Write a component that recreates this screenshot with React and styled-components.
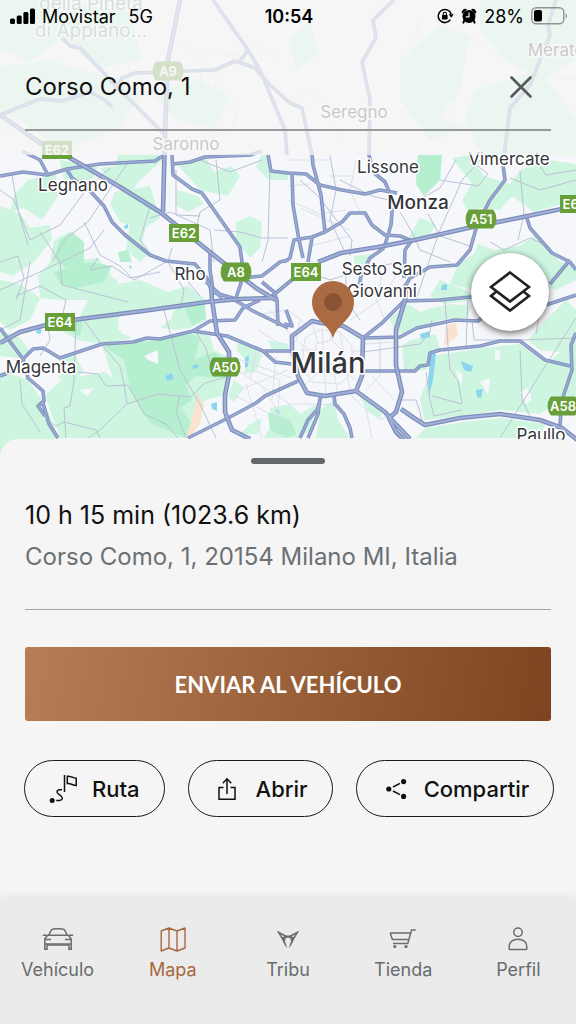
import React, { useState } from "react";
import styled, { createGlobalStyle } from "styled-components";

const GlobalStyle = createGlobalStyle`
  * {
    box-sizing: border-box;
  }
  body {
    margin: 0;
    background: #f5f5f5;
    font-family: Inter, "Liberation Sans", sans-serif;
    color: #111111;
  }
  button, input {
    font-family: inherit;
    color: inherit;
  }
`;

const Page = styled.div`
  display: flex;
  flex-direction: column;
  min-height: 100vh;
`;

const MapArea = styled.section`
  position: relative;
  flex: 1;
  min-height: 340px;
`;

const MapCanvas = styled.svg`
  position: absolute;
  top: 0;
  left: 0;
  width: 100%;
  height: calc(100% + 20px);
`;

const Header = styled.header`
  position: relative;
  height: 155px;
  background: rgba(246, 246, 246, 0.76);
`;

const StatusBar = styled.div`
  display: grid;
  grid-template-columns: 1fr auto 1fr;
  align-items: center;
  height: 32px;
  padding: 0 8px 0 10px;
  font-size: 18px;
  color: #000000;
`;

const StatusGroup = styled.div`
  display: flex;
  align-items: center;
  justify-content: ${({ $end }) => ($end ? "flex-end" : "flex-start")};
  gap: 7px;
`;

const Network = styled.span`
  margin-left: 6px;
`;

const Clock = styled.time`
  font-weight: 600;
`;

const SearchRow = styled.div`
  display: flex;
  align-items: center;
  margin: 12px 25px 0;
  height: 87px;
  border-bottom: 2px solid #97999b;
`;

const SearchInput = styled.input`
  flex: 1;
  min-width: 0;
  padding: 0;
  border: 0;
  outline: 0;
  background: transparent;
  font-size: 24px;
`;

const IconButton = styled.button`
  display: flex;
  align-items: center;
  justify-content: center;
  width: 44px;
  height: 44px;
  padding: 0;
  margin-right: 8px;
  border: 0;
  background: transparent;
  color: #55595c;
  cursor: pointer;
`;

const LayersButton = styled.button`
  position: absolute;
  top: 253px;
  right: 27px;
  display: flex;
  align-items: center;
  justify-content: center;
  width: 78px;
  height: 78px;
  padding: 0;
  border: 0;
  border-radius: 50%;
  background: #ffffff;
  color: #222222;
  box-shadow: 0 2px 7px rgba(0, 0, 0, 0.6);
  cursor: pointer;
`;

const Sheet = styled.main`
  position: relative;
  display: flex;
  flex-direction: column;
  padding: 19px 25px 81px;
  border-radius: 18px 18px 0 0;
  background: #f5f5f5;
`;

const Handle = styled.div`
  align-self: center;
  width: 74px;
  height: 6px;
  border-radius: 3px;
  background: #63686b;
`;

const Duration = styled.h1`
  margin: 36px 0 0;
  font-size: 25px;
  line-height: 30px;
  font-weight: 400;
`;

const Address = styled.p`
  margin: 12px 0 0;
  font-size: 24px;
  line-height: 30px;
  color: #6b7073;
`;

const Divider = styled.hr`
  width: 100%;
  height: 1px;
  margin: 37px 0;
  border: 0;
  background: #a5a7ac;
`;

const SendButton = styled.button`
  height: 74px;
  border: 0;
  border-radius: 3px;
  background: linear-gradient(100deg, #b67d56, #7d441f);
  color: #ffffff;
  font-family: Lato, sans-serif;
  font-size: 22px;
  font-weight: 700;
  cursor: pointer;
`;

const Actions = styled.div`
  display: flex;
  flex-wrap: wrap;
  gap: 23px;
  margin: 39px -6px 0 -1px;
`;

const PillButton = styled.button`
  display: flex;
  align-items: center;
  gap: 15px;
  height: 57px;
  padding: 0 24px;
  border: 1px solid #1a1a1a;
  border-radius: 29px;
  background: transparent;
  color: #111111;
  font-size: 22px;
  font-weight: 500;
  cursor: pointer;
`;

const TabBar = styled.nav`
  position: relative;
  display: grid;
  grid-template-columns: repeat(5, 1fr);
  height: 126px;
  padding-top: 26px;
  background: #ebebeb;
  box-shadow: 0 -1px 8px rgba(0, 0, 0, 0.08);
`;

const Tab = styled.a`
  display: flex;
  flex-direction: column;
  align-items: center;
  gap: 2px;
  font-size: 18px;
  line-height: 24px;
  text-decoration: none;
  color: ${({ $active }) => ($active ? "#a8683f" : "#686d70")};
`;

// map data
const parks = [
  "M0 0H60L130 12L142 60L100 68L60 40L30 62L0 50Z",
  "M0 66L50 60L110 78L140 96L118 130L60 150L20 120L0 110Z",
  "M150 90L200 80L230 96L215 128L176 120Z",
  "M288 40L310 22L318 55L296 70Z",
  "M400 60L440 25L470 35L460 90L440 118L470 128L430 140L400 100Z",
  "M480 0H576V60L540 80L505 60L480 30Z",
  "M475 90L540 70L576 120V155H480L465 120Z",
  "M118 155H160L165 158L140 180L128 195L110 182L100 168L116 166Z",
  "M28 180L56 174L58 196L42 220L24 208L10 212L14 195Z",
  "M60 160L98 167L90 184L64 180Z",
  "M115 192L150 186L160 218L142 230L120 222L110 204Z",
  "M176 163L206 158L214 172L232 166L240 176L228 196L200 190Z",
  "M177 190L198 196L204 204L188 212L176 205Z",
  "M236 222L250 216L262 222L260 248L250 258L236 240Z",
  "M262 155H268L272 172L288 173V180H268L256 166Z",
  "M130 222L146 226L142 244L150 252L140 262L126 250Z",
  "M0 206L20 214L30 228L50 225L52 240L34 262L12 276L0 272Z",
  "M54 240L70 232L84 242L84 262L100 262L104 276L118 280L112 300L60 300L40 298L38 276L50 262Z",
  "M0 280L20 284L40 298L30 320L10 330L0 322Z",
  "M60 262L98 258L118 284L140 280L168 292L188 286L204 298L206 320L190 328L176 330L160 328L172 318L174 306L120 314L118 330L132 338L100 344L78 340L60 330L78 320L88 300L58 290Z",
  "M0 330L20 338L30 352L18 358L0 356Z",
  "M0 372L26 378L42 400L52 420L58 438V470H0Z",
  "M46 352L60 358L76 356L84 372L70 382L58 378L68 366Z",
  "M45 395L62 380L104 372L124 385L142 396L180 438H60Z",
  "M102 345L147 340L172 335L190 332L210 336L214 350L226 356L228 380L222 396L206 400L194 412L186 438H136L120 400Z",
  "M240 338L250 346L262 354L256 372L244 374L246 360L236 350Z",
  "M268 340L288 344L288 352L272 350Z",
  "M234 380L244 388L234 402L228 396Z",
  "M270 408L290 404L300 414L316 404L310 430L300 438H264L272 424Z",
  "M250 424L262 418L258 434H240Z",
  "M418 155H442L440 180L424 196L416 184Z",
  "M452 158L470 155L484 176L510 184L520 170L550 160L576 164V200L534 212L512 196L500 210L480 208L470 214L462 200L472 184Z",
  "M420 218L436 224L428 238L406 242Z",
  "M478 244L494 250L520 246L534 236L550 250L560 262L576 266V280L556 290L530 284L500 270L474 290L450 284L458 264L474 254Z",
  "M440 280L470 292L476 300L444 304L430 296Z",
  "M354 256L372 254L366 266L354 264Z",
  "M390 318L408 304L420 312L432 308L452 304L470 306L468 318L440 320L422 326L404 334L394 330Z",
  "M410 340L436 334L440 350L430 356L426 370L404 372L402 346Z",
  "M432 356L482 348L520 344L544 362L568 368L560 402L540 414L500 410L460 416L424 420L420 398L428 378Z",
  "M546 320L566 300L576 310V340L560 352L540 350L528 340L538 328Z",
  "M416 438L426 428L464 422L500 418L545 424L540 438Z",
  "M360 396L382 410L380 420L366 410Z",
  "M548 362L576 340V400H562Z",
  "M320 410L334 400L338 420L350 438H316Z",
];

const woods = [
  "M60 240L72 232L84 242L84 264L66 268L54 258Z",
  "M54 272L90 262L112 266L104 282L76 288L60 284Z",
  "M104 346L160 340L188 332L200 338L194 360L214 352L224 360L222 378L196 376L186 384L192 400L180 408L194 426L186 438L152 424L142 412L130 388L124 360Z",
  "M418 155H442L440 180L424 196L416 184Z",
  "M64 316L84 318L80 336L66 330Z",
  "M184 306L204 300L206 318L192 326Z",
  "M268 412L290 420L296 434L286 438L270 430Z",
  "M118 252L128 250L132 262L120 262Z",
];

const fields = [
  "M196 394L204 404L200 424L190 438H186L194 412Z",
  "M446 326L456 322L458 336L444 346Z",
];

const gaps = [
  "M80 390L94 388L88 396L84 394Z",
  "M144 356L158 350L158 364L148 360Z",
  "M495 350H500V360H495Z",
  "M456 370L462 374L462 384L458 380Z",
  "M480 382L490 378L488 394Z",
  "M194 414L198 410L206 418L196 422Z",
  "M520 392L528 388L532 400L526 404Z",
  "M118 318L150 314L160 318L158 328L140 336L122 334Z",
];

const lakes = [
  "M165 376L172 373L174 379L167 381Z",
  "M192 366L198 364L198 368L193 369Z",
  "M211 404L217 402L217 411L212 409Z",
  "M245 358L249 355L248 366L245 368Z",
  "M275 410L280 411L278 415Z",
  "M124 226L128 224L128 228L125 229Z",
  "M129 265L132 267L130 269Z",
  "M431 352L436 354L433 380L429 396L428 380Z",
  "M461 361L473 366L471 372L464 370Z",
  "M476 390L483 389L481 398L477 397Z",
  "M420 334L430 331L430 337L421 339Z",
  "M442 285L447 284L447 290L441 290Z",
  "M37 328L42 330L40 334L36 333Z",
];

const lanes = [
  "M0 190L14 200L30 240L60 225L86 190L110 168",
  "M12 175L18 210L28 245",
  "M0 262L18 256L24 278L16 300",
  "M52 262L66 238L88 222L112 186L130 160",
  "M40 232L60 262L62 285L128 302",
  "M98 258L90 270L112 266L130 278L160 272",
  "M84 222L100 255L120 266L134 280L166 262",
  "M0 290L44 270L90 248L104 230",
  "M30 262L20 320L0 330",
  "M128 190L150 206L140 240L148 250",
  "M150 218L170 212L210 230L214 262",
  "M176 170L176 215L200 216",
  "M216 160L220 200L200 212L196 230",
  "M270 170L268 240L262 262",
  "M200 160L230 172L262 160",
  "M214 230L240 232L262 238L288 238",
  "M172 248L168 262L184 290L180 310",
  "M188 264L188 282L200 296",
  "M84 320L102 345L120 366L124 384L127 404L100 430L88 438",
  "M127 404L158 394L190 397L205 383L226 377",
  "M180 395L176 412L186 438",
  "M164 310L172 340L180 370L200 404L216 438",
  "M78 372L98 374L106 386L128 385L144 414L166 424L178 438",
  "M196 332L206 348L212 372",
  "M76 320L74 380L70 406L64 408L66 438",
  "M20 380L22 404L40 432",
  "M46 316L50 340L40 356",
  "M62 318L66 300L40 286L16 296",
  "M45 420L56 426L64 422L96 430L100 438",
  "M300 180L318 196L352 240L350 256",
  "M330 155L336 190L330 220L344 250",
  "M340 180L372 196L410 205L440 188L456 160",
  "M416 300L426 270L440 230L462 180L480 160",
  "M400 212L412 232L420 250L450 262",
  "M428 214L440 236L470 246",
  "M440 180L478 186L488 174L468 158",
  "M510 178L540 190L576 180",
  "M520 172L524 214L518 240",
  "M536 160L546 175L576 170",
  "M490 242L504 250L530 238L548 246",
  "M300 270L330 280L360 270L400 262",
  "M346 262L346 300L360 320",
  "M363 352L420 344L430 332L432 320",
  "M398 400L416 400L420 412L422 422",
  "M445 300L448 346L450 370L458 380L462 404L432 396",
  "M472 320L474 340L520 340L576 338",
  "M500 438L544 368L576 318",
  "M520 350L522 400L530 416",
  "M426 372L430 400L434 416L462 410",
  "M468 300L466 346M540 310L536 334",
];

const streets = [
  "M305 338L318 330L340 332L352 346L352 372L340 384L312 382L302 366Z",
  "M316 344L332 340L342 350L340 364L326 370L314 362Z",
  "M300 350L316 350M322 328L326 396M340 332L350 390M312 322L318 344M298 342L356 380",
  "M330 340L342 300M302 388L318 372M334 372L338 396M352 352L363 350",
  "M288 310L306 324M300 320L296 342M350 320L380 300L400 270",
  "M288 160H330M288 186L310 184M330 176H352M300 208L350 230M310 246L350 236",
  "M288 200L320 214L346 210M356 160L350 190L360 212M386 262L376 300L384 318",
  "M252 370L280 380L276 438M236 396L270 414M246 384L262 438M240 372L290 404",
  "M230 356L292 378M256 352L250 380M276 356L272 400",
  "M410 360L404 372M380 345L380 370M372 438L366 410L350 394M380 420L394 412",
  "M288 404L320 404L340 406M240 390L288 370M262 386L290 430",
  "M270 310L290 334M262 314L288 310M258 330L284 346",
  "M364 344L394 342M380 338L380 376L366 390M372 376L394 400",
  "M190 100L196 130L230 134L240 100M200 60L204 140M216 74L214 150",
  "M50 62L54 110L0 130M100 96L60 150M130 60L128 100",
  "M176 40L190 50L240 56M300 90L320 98L340 140M280 60L250 40",
  "M455 30L460 80L450 120L436 140M420 20L410 55L440 40L456 30L500 55L530 70",
  "M400 110L420 120L436 128L520 122L560 90M536 75L576 80M490 140L520 118L545 110",
];

const roads = [
  "M62 38L70 46L80 48L120 90L166 136",
  "M0 115L40 99L62 101L90 92L105 100L112 107",
  "M115 90L122 78L135 73L215 70L235 61L255 68L270 85L290 103L302 108L312 155L313 165L321 195L325 232",
  "M213 0L248 50L260 70L285 130L287 155",
  "M248 50L240 61",
  "M394 0L373 20L376 38L362 62L370 100L369 155L373 172L385 182L393 200L391 225L384 248",
  "M556 0L548 25L550 35L538 65L530 85L510 108L503 165L505 180L490 200L477 225L470 250L457 265L430 267L410 278L404 288",
  "M0 176L23 172L47 175L67 169L100 164L155 161L164 155",
  "M22 151L40 160L48 175",
  "M67 170L72 178L90 191L104 206L112 222L125 235L150 255L166 261L195 264L207 278L212 292L236 299",
  "M172 155L173 175L192 189L202 193L240 247L242 262L241 283L236 298",
  "M173 164L190 162L205 157L250 155L262 151",
  "M268 155L271 171L288 173L306 174L320 185L342 190L365 194L380 190L397 193",
  "M292 173L293 205L299 240L303 258",
  "M284 262L290 258L294 240L312 237L325 232L342 222L350 213L365 213L372 225L385 235L400 236L412 241",
  "M312 238L308 262",
  "M412 240L405 250L404 278M384 248L370 258L361 276L358 292",
  "M526 215L530 228L545 245L552 253L570 262L576 270",
  "M570 260L550 284M576 295L546 305M406 301L440 300L480 296",
  "M363 338L400 337L417 328L455 320L478 321L494 308",
  "M363 338L382 323L406 299",
  "M362 371L415 371L420 366L428 365L430 353L440 350L480 346L500 341L520 341L545 360L570 366",
  "M576 333L571 345L572 370L562 400L560 425",
  "M321 397L317 410L308 420L300 438M320 398L318 414L308 438",
  "M334 396L335 404L344 414L350 428L352 438",
  "M0 328L23 359L28 378L43 391L44 401L38 406L45 416M43 403L49 424L58 438",
  "M0 376L10 372L23 359L33 349L43 348L50 352L60 358L102 344L133 342L147 338L160 339L193 331L213 334L227 336L263 351L292 351",
  "M193 331L210 321L235 320L243 308L260 300",
  "M188 438L230 417L256 403L265 396L298 381",
  "M233 299L253 311L288 328",
  "M277 299L278 326M263 351L275 362L292 364",
  "M241 278L262 276L280 262L288 260M262 282L274 292L277 300",
  "M210 254L210 270L213 290L222 298",
  "M270 298L288 283L308 267",
  "M206 282L222 296M286 310L292 326L284 324",
];

const motorways = [
  "M0 115L40 143L70 158L120 187L160 212L210 252L235 272L256 288L276 300",
  "M180 0L168 60L165 133L163 212",
  "M0 343L20 332L50 324L80 319L143 311L207 302L240 299L272 298",
  "M318 262L341 253L378 247L415 240L468 228L518 218L576 206",
  "M211 286L212 300L217 333L229 352L229 375L225 395L225 412L232 430L250 439",
  "M406 284L405 300L396 330L396 365L402 392L396 412L389 418L396 432L404 440",
  "M292 350L292 336L312 321L321 323L343 326L363 338L362 376L356 391L325 396L307 393L298 376L292 350",
  "M356 391L385 412L392 420L410 439",
  "M401 409L414 418L425 425L460 418L500 414L540 420L562 428L580 442",
];

const towns = [
  { x: 73, y: 191, name: "Legnano" },
  { x: 190, y: 280, name: "Rho" },
  { x: 388, y: 173, name: "Lissone" },
  { x: 418, y: 209, name: "Monza", size: 19 },
  { x: 509, y: 165, name: "Vimercate" },
  { x: 382, y: 275, name: "Sesto San" },
  { x: 382, y: 297, name: "Giovanni" },
  { x: 41, y: 373, name: "Magenta" },
  { x: 541, y: 441, name: "Paullo" },
  { x: 186, y: 150, name: "Saronno" },
  { x: 354, y: 118, name: "Seregno" },
  { x: 556, y: 56, name: "Merate" },
  { x: 91, y: 10, name: "della Pineta", size: 19, park: true },
  { x: 91, y: 37, name: "di Appiano...", size: 19, park: true },
  { x: 328, y: 373, name: "Milán", size: 29 },
];

const shields = [
  { x: 57, y: 150, code: "E62" },
  { x: 184, y: 233, code: "E62" },
  { x: 306, y: 272, code: "E64" },
  { x: 60, y: 322, code: "E64" },
  { x: 575, y: 204, code: "E64" },
  { x: 168, y: 71, code: "A9", round: true },
  { x: 236, y: 272, code: "A8", round: true },
  { x: 481, y: 219, code: "A51", round: true },
  { x: 225, y: 367, code: "A50", round: true },
  { x: 563, y: 406, code: "A58", round: true },
];

function Paths({ list, ...rest }) {
  return (
    <g {...rest}>
      {list.map((d) => (
        <path key={d} d={d} />
      ))}
    </g>
  );
}

function CityMap() {
  return (
    <MapCanvas viewBox="0 0 576 470" preserveAspectRatio="xMidYMin slice" role="img" aria-label="Mapa de Milán">
      <rect width="576" height="470" fill="#f6f7fa" />
      <Paths list={parks} fill="#cdf5e0" />
      <Paths list={woods} fill="#b6efcf" />
      <Paths list={gaps} fill="#f6f7fa" />
      <Paths list={fields} fill="#f9e3cf" />
      <Paths list={lakes} fill="#8bd6ee" />
      <g fill="none" strokeLinejoin="round">
        <Paths list={streets} stroke="#dddfeb" strokeWidth="1" />
        <Paths list={lanes} stroke="#bcc1d6" strokeWidth="1" />
        <Paths list={roads} stroke="#8092bf" strokeWidth="3.6" />
        <Paths list={roads} stroke="#9aaad2" strokeWidth="1.6" />
        <Paths list={motorways} stroke="#7c8dbb" strokeWidth="4.6" />
        <Paths list={motorways} stroke="#a0afd6" strokeWidth="2.2" />
      </g>
      {shields.map(({ x, y, code, round }) => (
        <g key={`${code}-${x}`}>
          {round ? (
            <path
              d="M-12 -9H12Q15 -5 15 0Q15 5 12 9H-12Q-15 5 -15 0Q-15 -5 -12 -9Z"
              transform={`translate(${x} ${y})`}
              fill="#689f38"
              stroke="#689f38"
              strokeLinejoin="round"
            />
          ) : (
            <rect x={x - 15} y={y - 9} width="30" height="18" fill="#689f38" />
          )}
          <text x={x} y={y + 5} fill="#ffffff" fontSize="13" fontWeight="600" textAnchor="middle">
            {code}
          </text>
        </g>
      ))}
      {towns.map(({ x, y, name, size = 17, park }) => (
        <text
          key={name}
          x={x}
          y={y}
          fill={park ? "#5f9c86" : "#33363b"}
          fontSize={size}
          fontWeight={size > 17 && !park ? 500 : 400}
          stroke="#ffffff"
          strokeWidth="3"
          strokeLinejoin="round"
          paintOrder="stroke"
          textAnchor="middle"
        >
          {name}
        </text>
      ))}
      <path d="M333 339C331 325 312 320 312 302A21 21 0 0 1 354 302C354 320 335 325 333 339Z" fill="#ab6b42" />
      <circle cx="333" cy="302" r="9" fill="#8a5434" />
    </MapCanvas>
  );
}

// status bar icons
const SignalIcon = () => (
  <svg width="25" height="16" viewBox="0 0 25 16">
    <rect x="0" y="10.5" width="5" height="5.500" rx="1.5" />
    <rect x="6.700" y="7.500" width="5" height="8.500" rx="1.5" />
    <rect x="13.400" y="4" width="5" height="12" rx="1.5" />
    <rect x="20" y="0.500" width="5" height="15.500" rx="1.5" />
  </svg>
);

const RotationLockIcon = () => (
  <svg width="17" height="16" viewBox="0 0 17 16">
    <path d="M13.4 11.6A6.6 6.6 0 1 1 14.2 6.2" fill="none" stroke="#000" strokeWidth="1.5" />
    <path d="M11.7 6.3H16.7L14.2 9.8Z" />
    <rect x="5" y="7" width="5.6" height="4.4" rx="0.6" />
    <path d="M6.2 7V5.8A1.6 1.6 0 0 1 9.4 5.8V7" fill="none" stroke="#000" strokeWidth="1.1" />
  </svg>
);

const AlarmIcon = () => (
  <svg width="16" height="16" viewBox="0 0 16 16">
    <circle cx="8" cy="8.4" r="6.5" />
    <path d="M3.2 12.5L2.4 14.600M12.8 12.5L13.600 14.600" stroke="#000" strokeWidth="2" strokeLinecap="round" />
    <path d="M1.4 4.8A3 3 0 0 1 5 1.6ZM14.600 4.8A3 3 0 0 0 11 1.6Z" stroke="#000" strokeWidth="1.4" strokeLinejoin="round" />
    <path d="M8 4.6V8.8H4.8" fill="none" stroke="#f2f4f3" strokeWidth="1.2" />
  </svg>
);

const BatteryIcon = () => (
  <svg width="37" height="18" viewBox="0 0 37 18">
    <rect x="0.8" y="0.8" width="32" height="16" rx="4.5" fill="none" stroke="#8f9391" strokeWidth="1.4" />
    <rect x="3" y="3" width="8" height="11.6" rx="2" />
    <path d="M34.6 6.2C36.4 7 36.4 10.6 34.6 11.4Z" fill="#8f9391" />
  </svg>
);

const CloseIcon = () => (
  <svg width="24" height="24" viewBox="0 0 24 24" fill="none" stroke="currentColor" strokeWidth="2.6" strokeLinecap="round">
    <path d="M2.5 2.5L21.5 21.5M21.5 2.5L2.5 21.5" />
  </svg>
);

const LayersIcon = () => (
  <svg width="44" height="44" viewBox="0 0 44 44" fill="none" stroke="currentColor" strokeWidth="2.6">
    <path d="M22 2.5L41 17L22 31.5L3 17Z" />
    <path d="M8.5 21.5L3 26L22 40.5L41 26L35.5 21.5" />
  </svg>
);

// action icons
const RouteIcon = () => (
  <svg width="28" height="30" viewBox="0 0 28 30" fill="none" stroke="currentColor" strokeWidth="1.5">
    <path d="M15.5 1V18M18.3 2.2C21.5 1.6 24 4.2 27.2 4.2V11.6C24 11.6 21.5 9 18.3 9.6Z" />
    <path d="M13 15.8C10.5 15.6 7.6 15.8 8 18.2C8.5 20.6 13.6 21.4 13.4 24.2C13.2 26.8 10.5 26.6 7.2 26.6" />
    <circle cx="3.2" cy="26.6" r="2.5" fill="currentColor" stroke="none" />
  </svg>
);

const OpenIcon = () => (
  <svg width="28" height="28" viewBox="0 0 28 28" fill="none" stroke="currentColor" strokeWidth="1.5">
    <path d="M10.5 12.5H6V24.3H22V12.5H17.5M14 19V3.8M9.8 8.2L14 3.8L18.2 8.2" />
  </svg>
);

const ShareIcon = () => (
  <svg width="28" height="28" viewBox="0 0 28 28" fill="currentColor">
    <path d="M12 12L19 8.4M12 16L19 19.6" stroke="currentColor" strokeWidth="1.5" />
    <circle cx="7.8" cy="14" r="2.6" />
    <circle cx="22.6" cy="6.6" r="2.6" />
    <circle cx="22.6" cy="21.4" r="2.6" />
  </svg>
);

// tab icons
const CarIcon = () => (
  <svg width="32" height="32" viewBox="0 0 32 32" fill="none" stroke="currentColor" strokeWidth="1.5">
    <path d="M6.5 11.5L9.3 6.2Q10 5 11.5 4.9Q16 4.5 20.5 4.9Q22 5 22.7 6.2L25.5 11.5" />
    <path d="M0.8 11.3H5M31.2 11.3H27M5.5 11.3H26.5M5.5 11.3L2.8 15V25.3H5V21H27V25.3H29.2V15L26.5 11.3" />
    <path d="M3 15.5H9M29 15.5H23M3 20H29" />
  </svg>
);

const MapIcon = () => (
  <svg width="32" height="32" viewBox="0 0 32 32" fill="none" stroke="currentColor" strokeWidth="1.4" strokeLinejoin="round">
    <path d="M4.2 7L12 4L20 7L28 4V24L20 27L12 24L4.2 27ZM12 4V24M20 7V27" />
  </svg>
);

const TribuIcon = () => (
  <svg width="32" height="32" viewBox="0 0 32 32" fill="currentColor" fillRule="evenodd">
    <path d="M4.6 6.6L14.4 11.4H16V13.6L13.4 14.4L13 17.4L15.4 24.2L12.6 21L9.6 14.8ZM8.8 10.4L10.4 13L12.6 12.4Z" />
    <path d="M27.4 6.6L17.6 11.4H16V13.6L18.6 14.4L19 17.4L16.6 24.2L19.4 21L22.4 14.8ZM23.2 10.4L21.6 13L19.4 12.4Z" />
  </svg>
);

const CartIcon = () => (
  <svg width="32" height="32" viewBox="0 0 32 32" fill="none" stroke="currentColor" strokeWidth="1.5">
    <path d="M28.8 6H24.5L20.8 19.4H6M3.2 9H23.6M3.2 9L5.4 15.4H21.7" />
    <circle cx="7.8" cy="22.6" r="1.6" fill="currentColor" stroke="none" />
    <circle cx="19" cy="22.6" r="1.6" fill="currentColor" stroke="none" />
  </svg>
);

const ProfileIcon = () => (
  <svg width="32" height="32" viewBox="0 0 32 32" fill="none" stroke="currentColor" strokeWidth="1.5">
    <circle cx="16" cy="8.3" r="4.2" />
    <path d="M7.2 24.8V22.5C7.2 18 11 15.2 16 15.2S24.8 18 24.8 22.5V24.8Q24.8 25.6 24 25.6H8Q7.2 25.6 7.2 24.8Z" />
  </svg>
);

const actions = [
  { label: "Ruta", Icon: RouteIcon },
  { label: "Abrir", Icon: OpenIcon },
  { label: "Compartir", Icon: ShareIcon },
];

const tabs = [
  { label: "Vehículo", Icon: CarIcon },
  { label: "Mapa", Icon: MapIcon },
  { label: "Tribu", Icon: TribuIcon },
  { label: "Tienda", Icon: CartIcon },
  { label: "Perfil", Icon: ProfileIcon },
];

function App() {
  const [search, setSearch] = useState("Corso Como, 1");
  const [activeTab, setActiveTab] = useState("Mapa");

  return (
    <>
      <GlobalStyle />
      <Page>
        <MapArea>
          <CityMap />
          <Header>
            <StatusBar>
              <StatusGroup>
                <SignalIcon />
                <span>Movistar</span>
                <Network>5G</Network>
              </StatusGroup>
              <Clock>10:54</Clock>
              <StatusGroup $end>
                <RotationLockIcon />
                <AlarmIcon />
                <span>28%</span>
                <BatteryIcon />
              </StatusGroup>
            </StatusBar>
            <SearchRow>
              <SearchInput
                type="text"
                aria-label="Buscar destino"
                value={search}
                onChange={(event) => setSearch(event.target.value)}
              />
              <IconButton type="button" aria-label="Borrar" onClick={() => setSearch("")}>
                <CloseIcon />
              </IconButton>
            </SearchRow>
          </Header>
          <LayersButton type="button" aria-label="Capas">
            <LayersIcon />
          </LayersButton>
        </MapArea>

        <Sheet>
          <Handle />
          <Duration>10 h 15 min (1023.6 km)</Duration>
          <Address>Corso Como, 1, 20154 Milano MI, Italia</Address>
          <Divider />
          <SendButton type="button">ENVIAR AL VEHÍCULO</SendButton>
          <Actions>
            {actions.map(({ label, Icon }) => (
              <PillButton key={label} type="button">
                <Icon />
                {label}
              </PillButton>
            ))}
          </Actions>
        </Sheet>

        <TabBar>
          {tabs.map(({ label, Icon }) => (
            <Tab
              key={label}
              href={`#${label}`}
              $active={label === activeTab}
              onClick={() => setActiveTab(label)}
            >
              <Icon />
              {label}
            </Tab>
          ))}
        </TabBar>
      </Page>
    </>
  );
}

export default App;
